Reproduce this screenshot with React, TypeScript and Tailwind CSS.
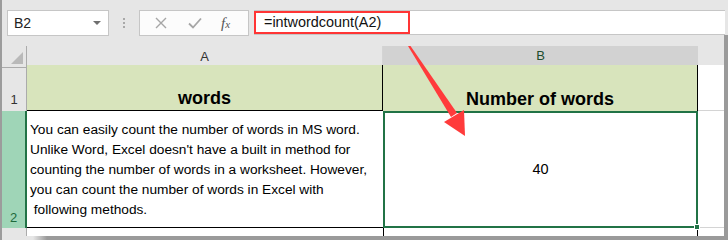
import React from 'react';

const sans = { fontFamily: '"Liberation Sans", Arial, sans-serif' };

const App = () => {
  const lines = [
    'You can easily count the number of words in MS word.',
    "Unlike Word, Excel doesn't have a built in method for",
    'counting the number of words in a worksheet. However,',
    'you can count the number of words in Excel with',
    '\u00a0following methods.',
  ];

  return (
    <div className="relative flex h-[240px] w-[728px] flex-col overflow-hidden border-l-2 border-[#9c9c9c] bg-[#e6e6e6]" style={sans}>
      {/* formula bar strip */}
      <div className="flex h-[35px] shrink-0 items-start pt-[10px]">
        <div className="ml-[5px] flex h-[26px] w-[102px] items-center justify-between border border-[#c6c6c6] bg-white pl-[6px] pr-[7px]">
          <span className="text-[14px] text-[#222]">B2</span>
          <span className="h-0 w-0 border-x-[4px] border-t-[4px] border-x-transparent border-t-[#6f6f6f]" />
        </div>
        <div className="flex h-[26px] w-[30px] flex-col items-center justify-center gap-[2px]">
          <span className="h-[2px] w-[2px] bg-[#a8a8a8]" />
          <span className="h-[2px] w-[2px] bg-[#a8a8a8]" />
          <span className="h-[2px] w-[2px] bg-[#a8a8a8]" />
        </div>
        <div className="flex h-[26px] w-[110px] items-center border border-[#c6c6c6] bg-[#fcfcfc]">
          <svg width="12" height="12" viewBox="0 0 12 12" className="ml-[15px]">
            <path d="M1 1 L11 11 M11 1 L1 11" stroke="#a6a6a6" strokeWidth="1.4" />
          </svg>
          <svg width="14" height="12" viewBox="0 0 14 12" className="ml-[21px]">
            <path d="M1 6.5 L5 10.5 L13 1.5" stroke="#a6a6a6" strokeWidth="1.8" fill="none" />
          </svg>
          <span className="ml-[19px] text-[15px] italic text-[#555]" style={{ fontFamily: '"Liberation Serif", serif' }}>
            f<span className="text-[11px]">x</span>
          </span>
        </div>
        <div className="ml-[5px] flex h-[25px] flex-1 items-stretch border-y border-[#c6c6c6] bg-white">
          <div className="flex w-[156px] items-center border-2 border-[#ff3535] pl-[8px] text-[14.4px] text-[#111]">=intwordcount(A2)</div>
        </div>
        <div className="w-[3px]" />
      </div>

      <div className="flex flex-1">
        <div className="flex flex-1 flex-col pt-[11px]">
          {/* column headers */}
          <div className="grid h-[19px] grid-cols-[25px_356px_315px_1fr] text-[13px]">
            <div className="relative border-b border-r border-[#ababab]">
              <span className="absolute bottom-[3px] right-[3px] h-0 w-0 border-b-[12px] border-l-[12px] border-b-[#b9b9b9] border-l-transparent" />
            </div>
            <div className="flex items-center justify-center border-b border-r border-[#ababab] border-r-[#d4d4d4] text-[#333]">A</div>
            <div className="flex items-center justify-center border-b-2 border-[#217346] bg-[#d2d2d2] text-[#1e4d2e]">B</div>
            <div className="border-b border-[#ababab]" />
          </div>

          {/* row 1 */}
          <div className="grid h-[46px] grid-cols-[25px_356px_315px_1fr]">
            <div className="flex items-end justify-center border-r border-[#ababab] pb-[2px] text-[13px] text-[#333]">1</div>
            <div className="flex items-end justify-center border-b border-r border-black bg-[#d8e4bc] pb-[1px] text-[18px] font-bold leading-[22px] text-black">words</div>
            <div className="flex items-end justify-center border-r border-black bg-[#d8e4bc] pb-[1px] text-[18px] font-bold leading-[22px] text-black">Number of words</div>
            <div className="border-b border-[#d4d4d4] bg-white" />
          </div>

          {/* row 2 */}
          <div className="grid h-[117px] grid-cols-[25px_356px_315px_1fr]">
            <div className="flex items-end justify-center border-r-2 border-[#217346] bg-[#9fd5b7] pb-[1px] text-[13px] text-[#1e6a3c]">2</div>
            <div className="flex flex-col justify-end border-b border-black bg-white pb-[7px] pl-[3px] text-[13.7px] leading-[20px] text-black">
              {lines.map((l) => (
                <div key={l} className="whitespace-pre">{l}</div>
              ))}
            </div>
            <div className="relative flex items-center justify-center border-2 border-[#217346] bg-white text-[14.5px] text-black">
              40
              <span className="absolute -bottom-[4px] -right-[4px] h-[6px] w-[6px] border border-white bg-[#217346]" />
            </div>
            <div className="border-b border-[#d4d4d4] bg-white" />
          </div>

          {/* row 3 */}
          <div className="grid h-[8px] grid-cols-[25px_356px_315px_1fr]">
            <div className="border-r border-[#ababab]" />
            <div className="bg-white" />
            <div className="border-x border-black bg-white" />
            <div className="bg-white" />
          </div>
          <div className="ml-[31px] h-[4px] bg-[linear-gradient(90deg,#e6e6e6,#9a9a9a_14px)]" />
        </div>
        <div className="w-[4px] bg-[#9a9a9a]" />
      </div>

      <svg className="pointer-events-none absolute left-0 top-0" width="728" height="240" viewBox="0 0 728 240">
        <polygon points="406,46 408.5,46 455,113 449,117" fill="#ff3b3b" />
        <polygon points="442,122 462,110 463,136" fill="#ff3b3b" />
      </svg>
    </div>
  );
};

export default App;
